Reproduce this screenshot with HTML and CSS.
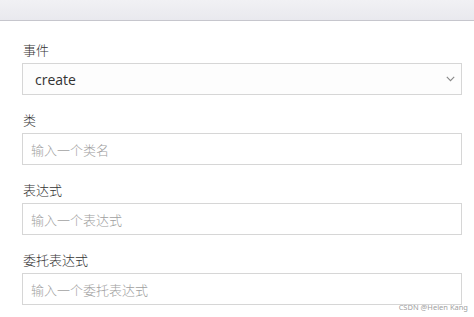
FILE: index.html
```html
<!DOCTYPE html>
<html lang="zh">
<head>
<meta charset="utf-8">
<link rel="stylesheet" href="styles.css">
</head>
<body>
<div class="topbar"></div>
<div class="form">
  <div class="group">
    <div class="label">事件</div>
    <div class="select">
      <span class="value">create</span>
      <svg class="chev" width="9" height="6" viewBox="0 0 9 6"><path d="M0.8 0.8 L4.5 4.6 L8.2 0.8" fill="none" stroke="#888" stroke-width="1.1"/></svg>
    </div>
  </div>
  <div class="group">
    <div class="label">类</div>
    <div class="input"><span class="ph">输入一个类名</span></div>
  </div>
  <div class="group">
    <div class="label">表达式</div>
    <div class="input"><span class="ph">输入一个表达式</span></div>
  </div>
  <div class="group">
    <div class="label">委托表达式</div>
    <div class="input"><span class="ph">输入一个委托表达式</span></div>
  </div>
</div>
<div class="watermark">CSDN @Helen Kang</div>
</body>
</html>
```
FILE: styles.css
```css
html, body {
  margin: 0;
  padding: 0;
  background: #fff;
  width: 474px;
  height: 317px;
  overflow: hidden;
  font-family: "Open Sans", "Noto Sans CJK SC", sans-serif;
  position: relative;
}
.topbar {
  height: 20px;
  background: linear-gradient(#f1f1f4, #e9e9ee);
  border-bottom: 1px solid #c6c6cd;
}
.form {
  padding: 19px 12px 0 22px;
  display: flex;
  flex-direction: column;
  gap: 15px;
}
.group {
  display: flex;
  flex-direction: column;
  gap: 3px;
}
.label {
  height: 20px;
  line-height: 20px;
  font-size: 13px;
  font-weight: 300;
  color: #333;
  padding-left: 1px;
  font-family: "Noto Sans CJK SC", sans-serif;
}
.select, .input {
  box-sizing: border-box;
  height: 32px;
  border: 1px solid #d6d6d6;
  display: flex;
  align-items: center;
}
.select {
  background: #fdfdfd;
  padding: 0 6px 0 12px;
  justify-content: space-between;
}
.value {
  font-size: 14px;
  color: #333;
}
.input {
  background: #fff;
  padding-left: 8px;
}
.ph {
  font-size: 13px;
  font-weight: 300;
  color: #a0a0a0;
  font-family: "Noto Sans CJK SC", sans-serif;
}
.watermark {
  position: absolute;
  right: 6px;
  bottom: 5px;
  font-size: 7.5px;
  color: #a0a0a0;
  font-family: "Noto Sans", sans-serif;
}
```
